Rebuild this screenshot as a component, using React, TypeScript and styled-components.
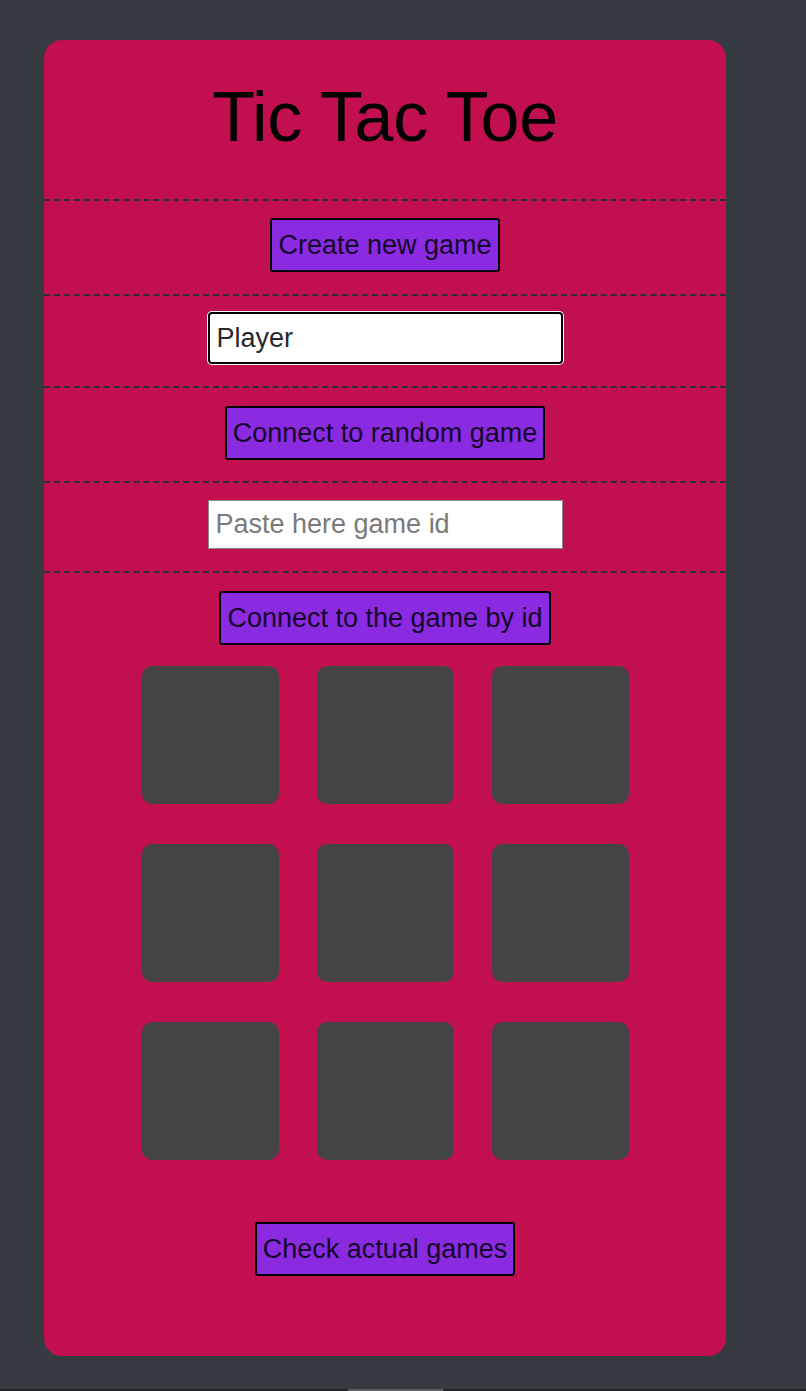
import React from "react";
import styled, { createGlobalStyle } from "styled-components";

const Global = createGlobalStyle`
  html, body {
    margin: 0;
    padding: 0;
    background: #363b42;
    font-family: "Liberation Sans", Arial, sans-serif;
  }
  body { min-height: 1391px; }
`;

const Page = styled.div`
  padding: 40px 0 35px 44px;
`;

const Card = styled.main`
  width: 682px;
  height: 1316px;
  box-sizing: border-box;
  background: #c20f4f;
  border-radius: 18px;
  display: flex;
  flex-direction: column;
  overflow: hidden;
`;

const Section = styled.section<{ $pt: number; $pb: number; $dashed?: boolean }>`
  display: flex;
  flex-direction: column;
  align-items: center;
  padding-top: ${(p) => p.$pt}px;
  padding-bottom: ${(p) => p.$pb}px;
  border-bottom: ${(p) => (p.$dashed ? "2px dashed #29322f" : "none")};
`;

const Title = styled.h1`
  margin: 0;
  font-weight: 400;
  font-size: 70px;
  line-height: 80px;
  color: #000;
  letter-spacing: -0.3px;
`;

const Button = styled.button`
  font-family: "Liberation Sans", Arial, sans-serif;
  font-size: 27px;
  color: #14052a;
  background: #8a2be2;
  border: 2px solid #000;
  border-radius: 3px;
  height: 54px;
  padding: 0 6px;
  box-sizing: border-box;
  cursor: pointer;
`;

const TextInput = styled.input<{ $focused?: boolean }>`
  font-family: "Liberation Sans", Arial, sans-serif;
  font-size: 27px;
  color: #2a2a2a;
  background: #fff;
  box-sizing: border-box;
  width: 355px;
  height: ${(p) => (p.$focused ? 52 : 49)}px;
  padding: 0 7px;
  border: ${(p) => (p.$focused ? "2px solid #000" : "1px solid #8a8a8a")};
  border-radius: ${(p) => (p.$focused ? 4 : 0)}px;
  box-shadow: ${(p) => (p.$focused ? "0 0 0 1px #fff" : "none")};
  outline: none;
  &::placeholder { color: #7a7a7a; }
`;

const Board = styled.div`
  display: grid;
  grid-template-columns: repeat(3, 137px);
  grid-auto-rows: 138px;
  column-gap: 38px;
  row-gap: 40px;
  margin-top: 21px;
`;

const Cell = styled.div`
  background: #444444;
  border-radius: 10px;
`;

const ScrollTrack = styled.div`
  position: fixed;
  left: 0;
  right: 0;
  bottom: 0;
  height: 2px;
  background: #23272b;
`;

const ScrollThumb = styled.div`
  position: absolute;
  left: 348px;
  width: 95px;
  top: 0;
  height: 2px;
  background: #5d6166;
`;

export default function App() {
  return (
    <>
      <Global />
      <Page>
        <Card>
          <Section $pt={37} $pb={42} $dashed>
            <Title>Tic Tac Toe</Title>
          </Section>
          <Section $pt={17} $pb={22} $dashed>
            <Button>Create new game</Button>
          </Section>
          <Section $pt={16} $pb={22} $dashed>
            <TextInput $focused defaultValue="Player" />
          </Section>
          <Section $pt={18} $pb={21} $dashed>
            <Button>Connect to random game</Button>
          </Section>
          <Section $pt={17} $pb={22} $dashed>
            <TextInput placeholder="Paste here game id" />
          </Section>
          <Section $pt={18} $pb={0}>
            <Button>Connect to the game by id</Button>
            <Board>
              {Array.from({ length: 9 }).map((_, i) => (
                <Cell key={i} />
              ))}
            </Board>
          </Section>
          <Section $pt={62} $pb={0}>
            <Button>Check actual games</Button>
          </Section>
        </Card>
      </Page>
      <ScrollTrack>
        <ScrollThumb />
      </ScrollTrack>
    </>
  );
}
